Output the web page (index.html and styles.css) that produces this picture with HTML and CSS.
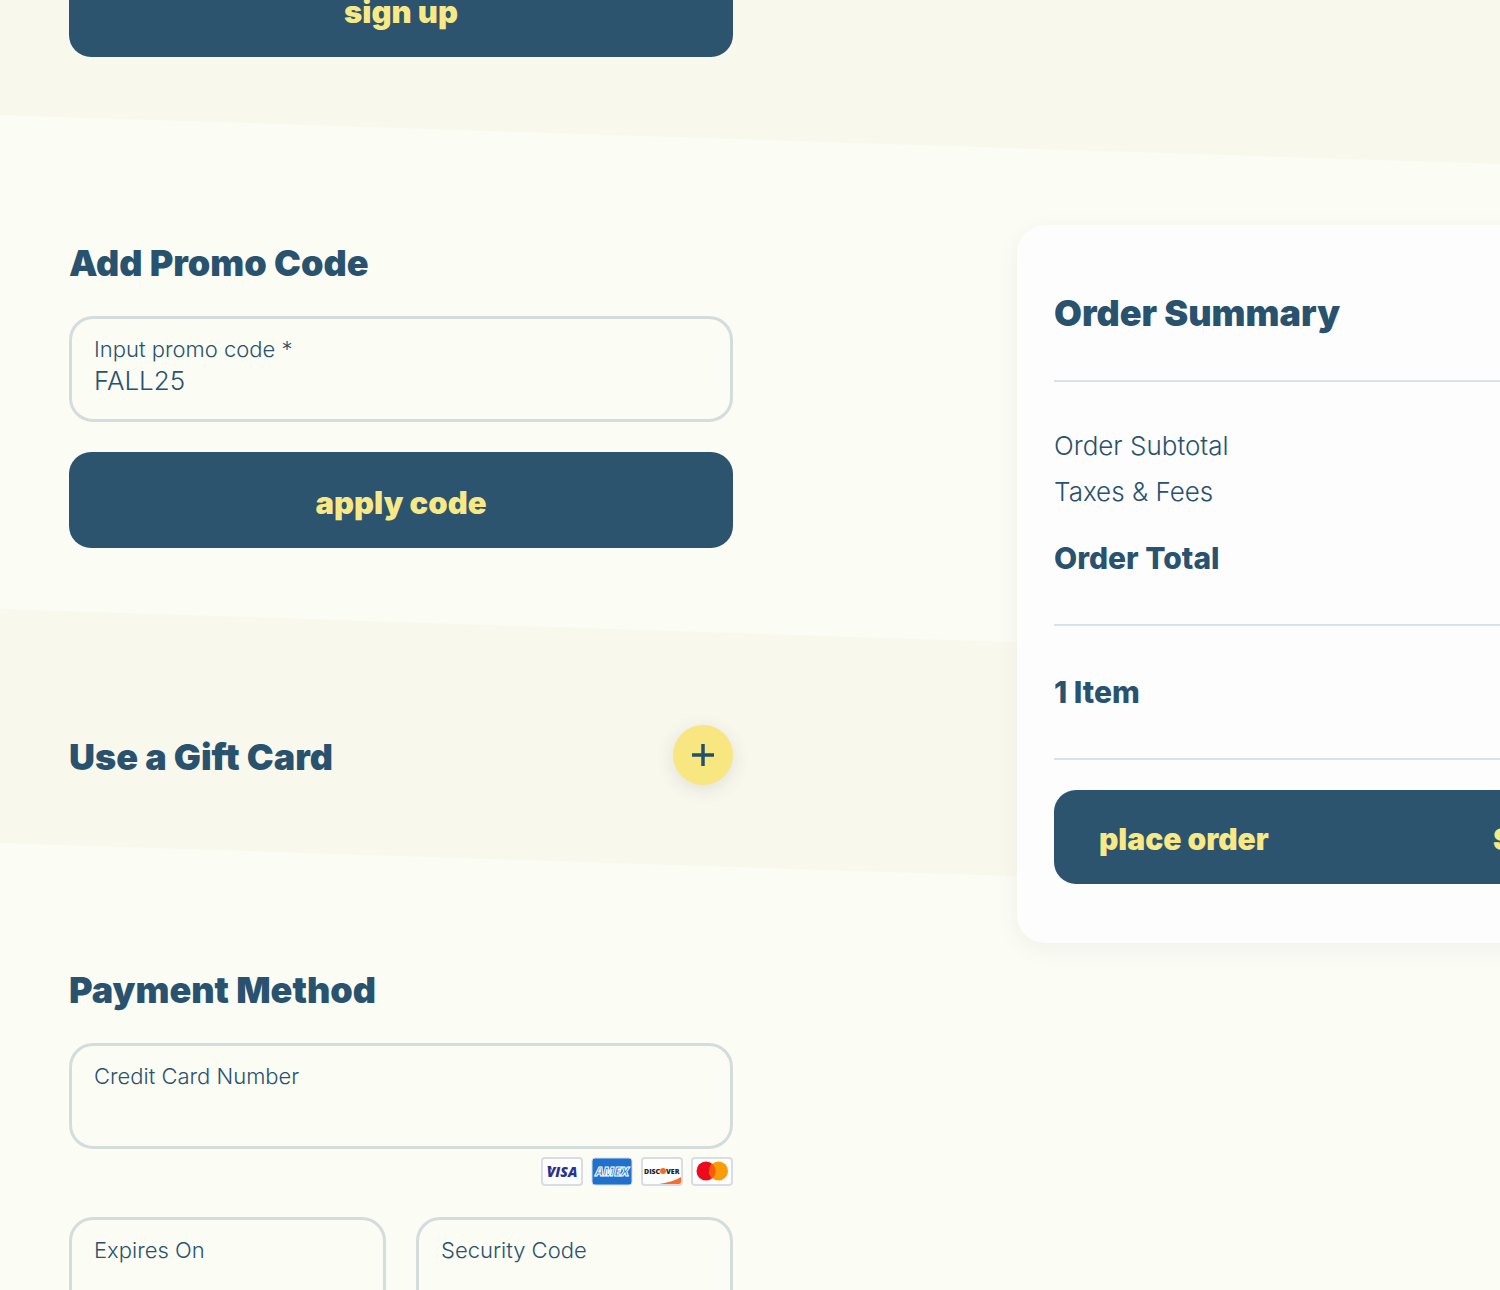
FILE: index.html
```html
<!DOCTYPE html>
<html lang="en">
<head>
    <meta charset="UTF-8">
    <meta name="viewport" content="width=device-width, initial-scale=1.0">
    <title>Checkout</title>
    <link rel="stylesheet" href="styles.css">
</head>
<body>
    <main class="checkout">
        <form class="sections">
            <!-- Sign up -->
            <section class="section section-signup tinted">
                <button type="button" class="btn">sign up</button>
            </section>

            <!-- Promo code -->
            <section class="section section-promo">
                <h2>Add Promo Code</h2>
                <div class="field">
                    <label for="promoCode">Input promo code *</label>
                    <input type="text" id="promoCode" value="FALL25">
                </div>
                <button type="button" class="btn btn-apply">apply code</button>
            </section>

            <!-- Gift card -->
            <section class="section section-gift tinted">
                <h2>Use a Gift Card</h2>
                <button type="button" class="add-btn" aria-label="Add gift card">
                    <svg width="24" height="24" viewBox="0 0 24 24">
                        <path d="M12 1v22M1 12h22" fill="none" stroke="#24506c" stroke-width="3.500"/>
                    </svg>
                </button>
            </section>

            <!-- Payment -->
            <section class="section section-payment">
                <h2>Payment Method</h2>
                <div class="field">
                    <label for="cardNumber">Credit Card Number</label>
                    <input type="text" id="cardNumber">
                </div>
                <div class="cards">
                    <svg class="card" viewBox="0 0 42 29">
                        <rect x="1" y="1" width="40" height="27" rx="3" fill="#fff" stroke="#d9dce4" stroke-width="2"/>
                        <text x="21" y="20" text-anchor="middle" class="visa">VISA</text>
                        <path d="M6 9h4l1 4z" fill="#29338c"/>
                    </svg>
                    <svg class="card" viewBox="0 0 42 29">
                        <rect x="1" y="1" width="40" height="27" rx="3" fill="#2070cd" stroke="#d9dce4"/>
                        <text x="21" y="19" text-anchor="middle" class="amex">AMEX</text>
                    </svg>
                    <svg class="card" viewBox="0 0 42 29">
                        <rect x="1" y="1" width="40" height="27" rx="3" fill="#fff" stroke="#d9dce4" stroke-width="2"/>
                        <path d="M18 27q14-2 22-7v5q0 2-2 2z" fill="#fb6d2c"/>
                        <text x="3" y="17" class="discover">DISC</text>
                        <circle cx="22" cy="14" r="3" fill="#f36b2a"/>
                        <text x="25" y="17" class="discover">VER</text>
                    </svg>
                    <svg class="card" viewBox="0 0 42 29">
                        <rect x="1" y="1" width="40" height="27" rx="3" fill="#fff" stroke="#d9dce4" stroke-width="2"/>
                        <circle cx="15" cy="14" r="9.500" fill="#ec0a1c"/>
                        <circle cx="27.500" cy="14" r="9.500" fill="#f89c08"/>
                        <path d="M21.250 6.800a9.500 9.500 0 0 1 0 14.400a9.500 9.500 0 0 1 0-14.400z" fill="#fc5a08"/>
                    </svg>
                </div>
                <div class="field-row">
                    <div class="field">
                        <label for="expires">Expires On</label>
                        <input type="text" id="expires">
                    </div>
                    <div class="field">
                        <label for="cvv">Security Code</label>
                        <input type="text" id="cvv">
                    </div>
                </div>
            </section>
        </form>

        <aside class="summary">
            <h2>Order Summary</h2>
            <div class="summary-group totals">
                <p>Order Subtotal</p>
                <p>Taxes &amp; Fees</p>
                <p class="strong total">Order Total</p>
            </div>
            <div class="summary-group items">
                <p class="strong">1 Item</p>
            </div>
            <div class="summary-group">
                <button type="button" class="btn btn-order">
                    <span>place order</span>
                    <span>$</span>
                </button>
            </div>
        </aside>
    </main>
</body>
</html>
```
FILE: styles.css
```css
* {
    margin: 0;
    padding: 0;
    box-sizing: border-box;
}

body {
    font-family: Inter, "Liberation Sans", sans-serif;
    font-size: 26px;
    font-weight: 300;
    background: #fbfcf4;
    color: #29526e;
    overflow-x: hidden;
}

h2 {
    font-size: 36px;
    line-height: 44px;
    font-weight: 900;
}

/* form and summary share one row, the summary lies over the bands */
.checkout {
    display: grid;
    grid-template-columns: 1017px 578px;
    overflow: hidden;
    min-height: 100vh;
}

.sections {
    grid-row: 1;
    grid-column: 1 / -1;
    width: 100vw;
}

.section {
    position: relative;
    padding-left: 69px;
}

.section > * {
    position: relative;
    width: 664px;
    max-width: 100%;
}

/* slanted band */
.tinted::before {
    content: "";
    position: absolute;
    top: 0;
    left: 0;
    width: 100%;
    max-width: none;
    height: calc(100% + 49px);
    background: #f9f8ed;
    clip-path: polygon(0 0, 100% 49px, 100% 100%, 0 calc(100% - 49px));
}

.section-signup {
    margin-top: -39px;
    padding-bottom: 58px;
}

.section-signup::before {
    clip-path: polygon(0 0, 100% 0, 100% 100%, 0 calc(100% - 49px));
}

.section-promo {
    padding-top: 126px;
    padding-bottom: 61px;
}

.section-gift {
    display: flex;
    align-items: center;
    padding-top: 116px;
    padding-bottom: 58px;
}

.section-gift h2 {
    width: 604px;
    padding-top: 3px;
}

.section-payment {
    padding-top: 125px;
}

.btn {
    display: block;
    height: 96px;
    padding-top: 4px;
    border: none;
    border-radius: 22px;
    background: #2c546f;
    color: #f9e986;
    font-family: inherit;
    font-size: 31px;
    font-weight: 900;
    cursor: pointer;
}

.btn-apply {
    margin-top: 30px;
}

.add-btn {
    display: flex;
    align-items: center;
    justify-content: center;
    width: 60px;
    height: 60px;
    border: none;
    border-radius: 50%;
    background: #f8e681;
    box-shadow: 0 4px 18px rgba(41, 52, 80, 0.12);
    cursor: pointer;
}

.field {
    height: 106px;
    margin-top: 31px;
    padding: 17px 22px;
    border: 3px solid #d5dcde;
    border-radius: 24px;
}

.field label {
    display: block;
    font-size: 22px;
    line-height: 26px;
    font-weight: 300;
}

.field input {
    display: block;
    width: 100%;
    height: 36px;
    border: none;
    outline: none;
    background: none;
    color: inherit;
    font: inherit;
}

.cards {
    display: flex;
    justify-content: flex-end;
    gap: 8px;
    margin-top: 8px;
}

.card {
    width: 42px;
    height: 29px;
}

.card text {
    font-family: "Open Sans", sans-serif;
    font-weight: 800;
    font-style: italic;
}

.card .visa {
    font-size: 14px;
    fill: #29338c;
}

.card .amex {
    font-size: 12px;
    fill: #2070cd;
    stroke: #fff;
    stroke-width: 1px;
}

.card .discover {
    font-size: 7px;
    font-style: normal;
    fill: #222;
}

.field-row {
    display: flex;
    gap: 30px;
}

.field-row .field {
    flex: 1;
    min-width: 0;
}

.summary {
    position: relative;
    grid-row: 1;
    grid-column: 2;
    align-self: start;
    margin-top: 225px;
    padding: 66px 37px 59px;
    border-radius: 28px;
    background: #fdfdfe;
    box-shadow: 0 6px 24px rgba(41, 52, 80, 0.05);
}

.summary h2 {
    padding-bottom: 45px;
}

.summary-group {
    border-top: 2px solid #dce1e5;
    padding-top: 30px;
}

.summary p {
    line-height: 46px;
}

.summary .totals {
    padding-top: 41px;
    padding-bottom: 43px;
}

.summary .items {
    padding-top: 43px;
    padding-bottom: 43px;
}

.summary .strong {
    font-size: 30px;
    font-weight: 800;
}

.summary .total {
    margin-top: 20px;
}

.btn-order {
    display: flex;
    align-items: center;
    justify-content: space-between;
    width: 100%;
    height: 94px;
    padding: 4px 45px 0;
    font-size: 30px;
}
```
